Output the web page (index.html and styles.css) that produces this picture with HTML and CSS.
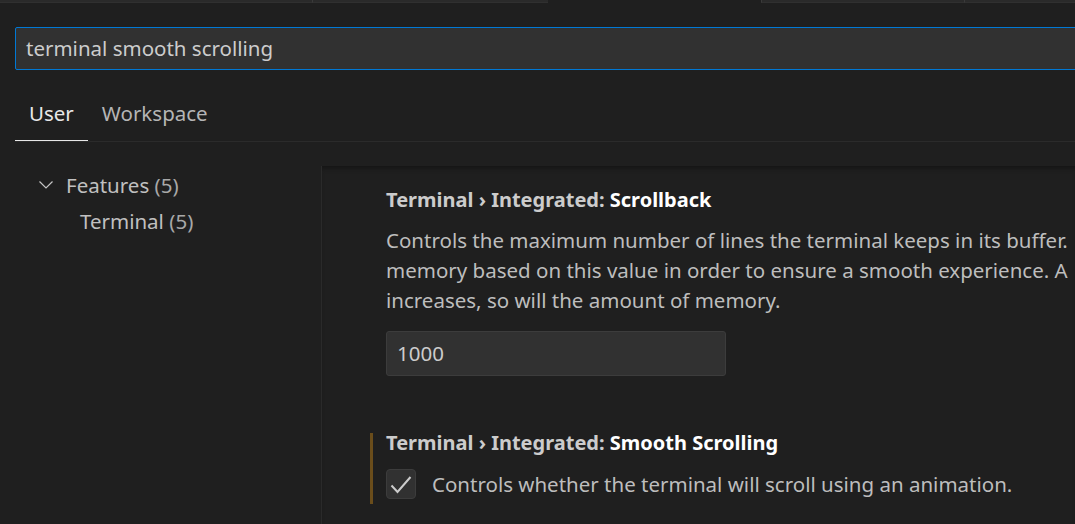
FILE: index.html
```html
<!DOCTYPE html>
<html lang="en">
<head>
    <meta charset="UTF-8">
    <meta name="viewport" content="width=device-width, initial-scale=1.0">
    <title>Settings</title>
    <link rel="stylesheet" href="styles.css">
</head>
<body>
    <div class="top-strip">
        <div class="strip-seg seg-a"></div>
        <div class="strip-seg seg-b"></div>
        <div class="strip-gap"></div>
        <div class="strip-seg seg-c"></div>
        <div class="strip-seg seg-d"></div>
    </div>

    <div class="search-wrap">
        <div class="search-box">terminal smooth scrolling</div>
    </div>

    <div class="tabs">
        <div class="tab active">User</div>
        <div class="tab">Workspace</div>
    </div>

    <div class="main">
        <div class="tree">
            <div class="tree-row">
                <svg class="chevron" width="16" height="16" viewBox="0 0 16 16">
                    <path d="M1.5 4.5 L8 11 L14.5 4.5" fill="none" stroke="#c5c5c5" stroke-width="1.2"/>
                </svg>
                <span>Features <span class="count">(5)</span></span>
            </div>
            <div class="tree-row child">
                <span>Terminal <span class="count">(5)</span></span>
            </div>
        </div>

        <div class="settings-list">
            <div class="setting first">
                <div class="setting-title">Terminal › Integrated: <span class="key">Scrollback</span></div>
                <div class="setting-desc">
                    <div>Controls the maximum number of lines the terminal keeps in its buffer.</div>
                    <div>memory based on this value in order to ensure a smooth experience. A</div>
                    <div>increases, so will the amount of memory.</div>
                </div>
                <div class="number-input">1000</div>
            </div>

            <div class="setting modified">
                <div class="setting-title">Terminal › Integrated: <span class="key">Smooth Scrolling</span></div>
                <div class="check-row">
                    <div class="checkbox">
                        <svg width="30" height="30" viewBox="0 0 30 30">
                            <path d="M5.5 16.5 L11.5 23 L24.5 8" fill="none" stroke="#cccccc" stroke-width="2"/>
                        </svg>
                    </div>
                    <div class="check-label">Controls whether the terminal will scroll using an animation.</div>
                </div>
            </div>
        </div>
    </div>
</body>
</html>
```

FILE: styles.css
```css
body {
    margin: 0;
    width: 1075px;
    height: 524px;
    overflow: hidden;
    background-color: #1f1f1f;
    font-family: "Noto Sans", "Open Sans", sans-serif;
    font-size: 20.5px;
    color: #cccccc;
}
.top-strip {
    display: flex;
    height: 3px;
}
.strip-seg {
    background-color: #2a2a2a;
    border-bottom: 1px solid #303030;
    box-sizing: border-box;
}
.seg-a {
    width: 313px;
    border-right: 1px solid #3a3a3a;
}
.seg-b {
    width: 235px;
}
.strip-gap {
    width: 213px;
}
.seg-c {
    width: 204px;
    border-left: 1px solid #3a3a3a;
    border-right: 1px solid #3a3a3a;
}
.seg-d {
    flex: 1;
}
.search-wrap {
    padding: 24px 0 0 15px;
    overflow: hidden;
}
.search-box {
    width: 1100px;
    height: 43px;
    box-sizing: border-box;
    border: 1px solid #0078d4;
    border-radius: 2px;
    background-color: #313131;
    padding-left: 10px;
    line-height: 41px;
    color: #cccccc;
}
.tabs {
    display: flex;
    margin: 21px 0 0 15px;
    border-bottom: 1px solid #2b2b2b;
}
.tab {
    height: 50px;
    box-sizing: border-box;
    padding: 0 14px 6px;
    display: flex;
    align-items: center;
    border-bottom: 1px solid transparent;
    color: #b5b5b5;
}
.tab.active {
    color: #e7e7e7;
    border-bottom-color: #e7e7e7;
}
.main {
    display: flex;
}
.tree {
    width: 321px;
    padding-top: 25px;
    flex-shrink: 0;
}
.tree-row {
    height: 36px;
    display: flex;
    align-items: center;
    padding-left: 38px;
    color: #c0c0c0;
}
.tree-row.child {
    padding-left: 80px;
}
.chevron {
    margin-right: 12px;
}
.count {
    color: #a8a8a8;
}
.settings-list {
    flex: 1;
    margin-top: 24px;
    height: 358px;
    overflow: hidden;
    border-left: 1px solid #2a2a2a;
    box-shadow: inset 0 5px 5px -3px #141414;
}
.setting {
    margin-left: 48px;
    border-left: 3px solid transparent;
    padding-left: 13px;
    white-space: nowrap;
}
.setting.first {
    margin-top: 24px;
}
.setting.modified {
    margin-top: 57px;
    border-left-color: #6a4d1b;
    padding-bottom: 5px;
}
.setting-title {
    line-height: 20px;
    font-size: 20px;
    font-weight: bold;
    color: #cccccc;
}
.key {
    color: #ffffff;
}
.setting-desc {
    margin-top: 15px;
    line-height: 30px;
    color: #bdbdbd;
}
.number-input {
    margin-top: 16px;
    width: 340px;
    height: 45px;
    box-sizing: border-box;
    border: 1px solid #3c3c3c;
    border-radius: 3px;
    background-color: #313131;
    padding-left: 10px;
    line-height: 43px;
    color: #cccccc;
}
.check-row {
    display: flex;
    align-items: center;
    margin-top: 16px;
}
.checkbox {
    width: 30px;
    height: 30px;
    box-sizing: border-box;
    border: 1px solid #3c3c3c;
    border-radius: 4px;
    background-color: #313131;
    display: flex;
    align-items: center;
    justify-content: center;
    margin-right: 16px;
}
.checkbox svg {
    flex-shrink: 0;
}
.check-label {
    color: #bdbdbd;
}
```
